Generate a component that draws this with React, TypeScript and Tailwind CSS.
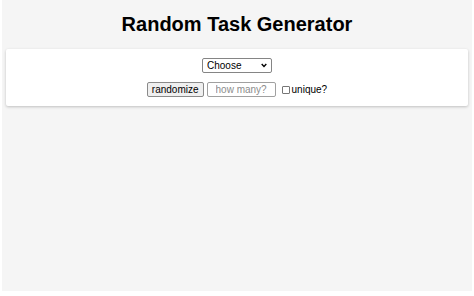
import { useState } from "react"

export default function App() {
  const [unique, setUnique] = useState(false)

  return (
    <div className="bg-white min-h-[296px] px-[2px] font-['Liberation_Sans',Arial,sans-serif] text-black">
      <div className="bg-[#f5f5f5] h-[291px] px-[4px] pt-[14px]">
        <h1 className="text-center text-[20px] leading-[20px] font-bold">Random Task Generator</h1>

        <div className="mt-[15px] bg-white rounded-[2px] shadow-[0_1px_3px_rgba(0,0,0,0.22)] py-[9px] flex flex-col items-center gap-[9px]">
          {/* task type */}
          <div className="relative w-[70px] h-[15px] leading-none">
            <select className="block appearance-none w-full h-full border border-[#858585] rounded-[2px] bg-white text-[10px] leading-[13px] pl-[4px] pr-[14px] outline-none">
              <option>Choose</option>
              <option>Chores</option>
              <option>Errands</option>
            </select>
            {/* chevron */}
            <svg
              className="absolute right-[5px] top-[5px] w-[6px] h-[5px] pointer-events-none"
              viewBox="0 0 6 5"
              fill="none"
              stroke="#000"
              strokeWidth={1.4}
            >
              <path d="M0.7 1 L3 3.4 L5.3 1" />
            </svg>
          </div>

          <div className="flex items-center">
            <button className="h-[15px] px-[4px] bg-[#efefef] border border-[#8a8a8a] rounded-[2px] text-[10px] leading-[13px]">
              randomize
            </button>
            <input
              type="text"
              placeholder="how many?"
              className="ml-[3px] w-[69px] h-[15px] border border-[#a0a0a0] rounded-[2px] bg-white text-[10px] leading-[13px] pl-[8px] pr-[6px] placeholder:text-[#8c8c8c] outline-none"
            />
            <label className="ml-[6px] flex items-center gap-[2px] text-[10px] leading-[13px]">
              <input
                type="checkbox"
                checked={unique}
                onChange={(e) => setUnique(e.target.checked)}
                className="appearance-none w-[8px] h-[8px] border border-[#767676] rounded-[1px] bg-white checked:bg-[#0075ff]"
              />
              unique?
            </label>
          </div>
        </div>
      </div>
    </div>
  )
}
